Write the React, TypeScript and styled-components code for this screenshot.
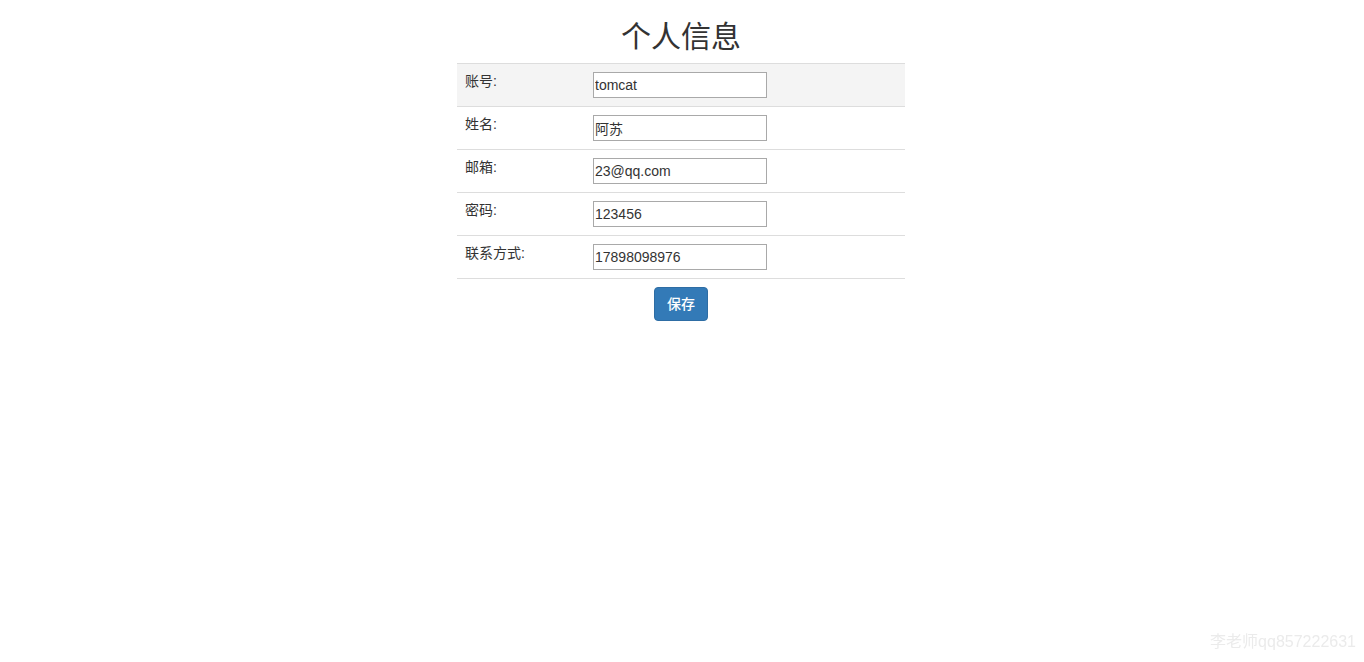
import styled, { createGlobalStyle } from "styled-components";

const GlobalStyle = createGlobalStyle`
  html, body {
    margin: 0;
    padding: 0;
    background: #ffffff;
  }
  body {
    font-family: "Liberation Sans", "Noto Sans CJK SC", sans-serif;
    font-size: 14px;
    line-height: 1.42857;
    color: #333333;
  }
`;

const Page = styled.div`
  width: 450px;
  margin: 0 auto;
  display: flex;
  flex-direction: column;
  align-items: flex-start;
`;

const Title = styled.h2`
  align-self: stretch;
  margin: 20px 2px 10px 0;
  font-size: 30px;
  font-weight: 400;
  line-height: 1.1;
  text-align: center;
  color: #333333;
`;

const Table = styled.table`
  width: 448px;
  border-collapse: collapse;
  border-spacing: 0;
  border-bottom: 1px solid #dddddd;
`;

const Row = styled.tr<{ $striped: boolean }>`
  background: ${(p) => (p.$striped ? "#f4f4f4" : "transparent")};
`;

const LabelCell = styled.td`
  width: 112px;
  padding: 8px;
  border-top: 1px solid #dddddd;
  vertical-align: top;
`;

const FieldCell = styled.td`
  padding: 8px;
  border-top: 1px solid #dddddd;
  vertical-align: top;
`;

const Input = styled.input`
  box-sizing: border-box;
  display: block;
  width: 174px;
  height: 26px;
  margin: 0;
  padding: 1px 1px;
  border: 1px solid #a9a9a9;
  background: #ffffff;
  font-family: "Liberation Sans", "Noto Sans CJK SC", sans-serif;
  font-size: 14px;
  color: #333333;
  outline: none;
`;

const Actions = styled.div`
  align-self: stretch;
  display: flex;
  justify-content: center;
  padding: 8px 2px 0 0;
`;

const Button = styled.button`
  box-sizing: border-box;
  height: 34px;
  padding: 6px 12px;
  border: 1px solid #2e6da4;
  border-radius: 4px;
  background: #337ab7;
  color: #ffffff;
  font-family: "Liberation Sans", "Noto Sans CJK SC", sans-serif;
  font-size: 14px;
  font-weight: 500;
  line-height: 20px;
  cursor: pointer;
`;

const Watermark = styled.div`
  position: fixed;
  right: 8px;
  bottom: 8px;
  font-family: "Liberation Sans", "Noto Sans CJK SC", sans-serif;
  font-size: 16px;
  color: #ebebeb;
  pointer-events: none;
`;

const fields = [
  { label: "账号:", value: "tomcat" },
  { label: "姓名:", value: "阿苏" },
  { label: "邮箱:", value: "23@qq.com" },
  { label: "密码:", value: "123456" },
  { label: "联系方式:", value: "17898098976" },
];

export default function App() {
  return (
    <>
      <GlobalStyle />
      <Page>
        <Title>个人信息</Title>
        <Table>
          <tbody>
            {fields.map((f, i) => (
              <Row key={f.label} $striped={i === 0}>
                <LabelCell>{f.label}</LabelCell>
                <FieldCell>
                  <Input defaultValue={f.value} />
                </FieldCell>
              </Row>
            ))}
          </tbody>
        </Table>
        <Actions>
          <Button>保存</Button>
        </Actions>
      </Page>
      <Watermark>李老师qq857222631</Watermark>
    </>
  );
}
